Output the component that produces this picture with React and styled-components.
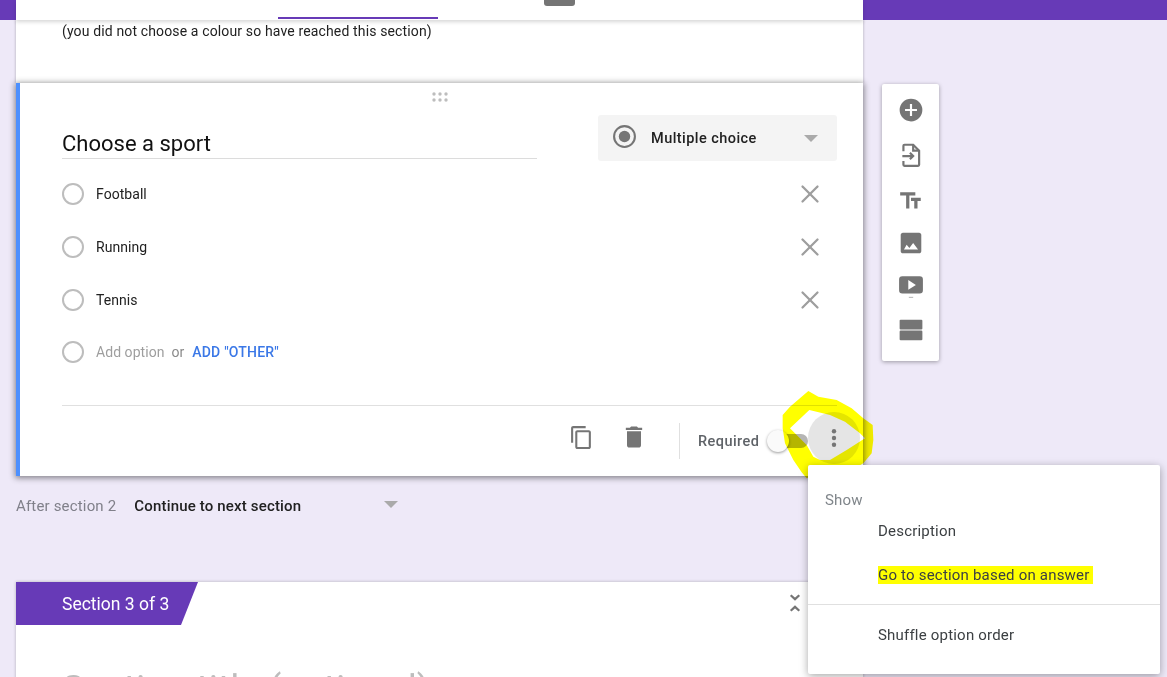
import React from 'react';
import styled, { createGlobalStyle } from 'styled-components';
import { X } from 'lucide-react';

const BG = '#eee9f8';
const Global = createGlobalStyle`
  html, body { margin: 0; padding: 0; height: 100%; overflow: hidden; background: ${BG}; }
  body { font-family: Roboto, "Noto Sans", sans-serif; color: #202124; }
  * { box-sizing: border-box; }
`;
const Page = styled.div`position: relative; width: 1167px; height: 677px; overflow: hidden; background: ${BG};`;
const TopBar = styled.header`position: relative; z-index: 3; height: 20px; background: #673ab7; padding: 0 304px 0 16px;`;
const TabStrip = styled.div`position: relative; height: 20px; background: #fff; box-shadow: 0 2px 4px rgba(0,0,0,.16);`;
const TabLine = styled.div`position: absolute; left: 262px; bottom: 1px; width: 160px; height: 2px; background: #673ab7;`;
const TabHandle = styled.div`position: absolute; left: 528px; top: 0; width: 31px; height: 6px; background: #757575; border-radius: 0 0 3px 3px;`;
const Column = styled.main`width: 847px; margin-left: 16px;`;
const DescCard = styled.section`height: 63px; background: #fff; padding: 2px 0 0 46px; font-size: 14px; letter-spacing: .14px; line-height: 18px; color: #212121; box-shadow: -1px 0 2px rgba(0,0,0,.14), 1px 0 2px rgba(0,0,0,.14);`;
const QuestionRow = styled.div`display: flex; align-items: flex-start; width: 923px;`;
const QuestionCard = styled.section`position: relative; z-index: 1; width: 847px; height: 393px; background: #fff; border-left: 4px solid #4d90fe; box-shadow: 0 1px 6px 1px rgba(0,0,0,.45); padding: 0 26px 0 42px;`;
const Drag = styled.svg`display: block; margin: 9px auto 0; position: relative; left: -9px;`;
const TitleRow = styled.div`display: flex; justify-content: space-between; margin-top: 13px;`;
const TitleField = styled.div`width: 475px; height: 44px; padding-top: 14px; border-bottom: 1px solid #dcdcdc; font-size: 22px; line-height: 30px; color: #111;`;
const TypeSelect = styled.div`display: flex; align-items: center; width: 239px; height: 46px; background: #f4f4f4; border-radius: 3px; padding: 0 19px 0 14px; font-size: 14.5px; letter-spacing: .45px; font-weight: 500; color: #212121;`;
const TypeIcon = styled.svg`display: block; flex: none; margin-bottom: 3px;`;
const TypeLabel = styled.span`flex: 1; margin-left: 14px;`;
const Caret = styled.span`display: block; flex: none; width: 0; height: 0; border-left: 7px solid transparent; border-right: 7px solid transparent; border-top: 7px solid #aaa;`;
const AfterCaret = styled(Caret)`margin-bottom: 4px;`;
const Options = styled.div`margin-top: 6px;`;
const OptionRow = styled.div`display: flex; align-items: center; height: ${p => p.$h || 53}px; font-size: 14px; letter-spacing: .05px; color: #212121;`;
const Radio = styled.span`width: 22px; height: 22px; border-radius: 50%; border: 2px solid #bdbdbd; margin-right: 12px; flex: none;`;
const OptionText = styled.span`flex: 1;`;
const Remove = styled(X)`color: #9e9e9e; margin-right: 12px; flex: none;`;
const AddText = styled.span`color: #9e9e9e;`;
const OrText = styled.span`color: #8a8a8a; margin: 0 8px 0 7px;`;
const OtherBtn = styled.span`font-weight: 500; letter-spacing: .2px; color: #3b78e7;`;
const Footer = styled.div`display: flex; align-items: center; margin-top: 27px; height: 71px; border-top: 1px solid #e0e0e0; padding-left: 507px;`;
const FootIcon = styled.svg`display: block; flex: none; margin: 0 ${p => p.$gap}px 8px 0;`;
const Divider = styled.div`width: 1px; height: 36px; background: #e0e0e0; margin-right: 18px;`;
const ReqLabel = styled.span`font-size: 14.5px; letter-spacing: .45px; font-weight: 500; color: #5f6368;`;
const Toggle = styled.div`position: relative; width: 38px; height: 14px; margin-left: 11px; border-radius: 7px; background: #b5b5b5;`;
const Knob = styled.span`position: absolute; left: -3px; top: -4px; width: 22px; height: 22px; border-radius: 50%; background: #fafafa; box-shadow: 0 1px 3px rgba(0,0,0,.4);`;
const MoreBtn = styled.div`position: absolute; left: 788px; top: 329px; width: 52px; height: 52px; display: flex; align-items: center; justify-content: center; border-radius: 50%; background: #e5e5e5;`;
const Scribble = styled.svg`position: absolute; left: 770px; top: 385px; z-index: 2; mix-blend-mode: multiply;`;
const SideTools = styled.aside`margin-left: 19px; margin-top: 1px; width: 57px; height: 277px; background: #fff; border-radius: 2px; box-shadow: 0 1px 4px rgba(0,0,0,.35); display: flex; flex-direction: column; align-items: center; padding-top: 4px;`;
const ToolBtn = styled.div`height: 44px; width: 100%; display: flex; align-items: center; justify-content: center; flex: none; padding-top: ${p => p.$pt || 0}px;`;
const AfterRow = styled.div`display: flex; align-items: center; height: 60px; font-size: 15px; letter-spacing: .17px; width: 382px;`;
const AfterLabel = styled.span`color: #80808a; margin-right: 18px;`;
const AfterValue = styled.span`flex: 1; font-weight: 500; color: #212121;`;
const SectionCard = styled.section`position: relative; margin-top: 46px; height: 200px; background: #fff; box-shadow: 0 0 3px rgba(0,0,0,.25);`;
const SectionTag = styled.div`width: 182px; height: 43px; background: #673ab7; color: #fff; font-size: 17.5px; line-height: 44px; padding-left: 46px; clip-path: polygon(0 0, 100% 0, 165px 100%, 0 100%);`;
const Collapse = styled.svg`position: absolute; left: 773px; top: 11px; display: block;`;
const SectionTitle = styled.div`margin: 41px 0 0 46px; font-size: 37.5px; line-height: 44px; color: #bdbdbd; white-space: nowrap;`;
const Menu = styled.div`position: absolute; z-index: 4; left: 808px; top: 465px; width: 352px; height: 209px; background: #fff; border-radius: 2px; box-shadow: 0 2px 8px rgba(0,0,0,.35); padding-top: 25px; font-size: 15px; letter-spacing: .2px; color: #3c4043;`;
const MenuHead = styled.div`padding-left: 17px; line-height: 20px; margin-bottom: -1px; color: #80868b;`;
const MenuItem = styled.div`height: 44px; padding-left: 70px; line-height: 44px;`;
const Mark = styled.span`background: #ffff00; padding-right: 3px;`;
const MenuSep = styled.div`height: 1px; background: #e0e0e0; margin: 7px 0 8px;`;

const I = '#757575';
const options = ['Football', 'Running', 'Tennis'];

export default function App() {
  return (
    <Page>
      <Global />
      <TopBar><TabStrip><TabLine /><TabHandle /></TabStrip></TopBar>
      <Column>
        <DescCard>(you did not choose a colour so have reached this section)</DescCard>
        <QuestionRow>
          <QuestionCard>
            <Drag width="18" height="10" viewBox="0 0 18 10" fill="#bdbdbd">
              {[2, 8, 14].map(x => [2, 8].map(y => <circle key={x + '-' + y} cx={x} cy={y} r="1.7" />))}
            </Drag>
            <TitleRow>
              <TitleField>Choose a sport</TitleField>
              <TypeSelect>
                <TypeIcon width="25" height="25" viewBox="0 0 24 24"><circle cx="12" cy="12" r="10" fill="none" stroke={I} strokeWidth="2" /><circle cx="12" cy="12" r="5.5" fill={I} /></TypeIcon>
                <TypeLabel>Multiple choice</TypeLabel>
                <Caret />
              </TypeSelect>
            </TitleRow>
            <Options>
              {options.map(o => (
                <OptionRow key={o}><Radio /><OptionText>{o}</OptionText><Remove size={30} strokeWidth={1.8} /></OptionRow>
              ))}
              <OptionRow $h={52}><Radio /><AddText>Add option</AddText><OrText>or</OrText><OtherBtn>ADD "OTHER"</OtherBtn></OptionRow>
            </Options>
            <Footer>
              <FootIcon $gap={26} width="25" height="25" viewBox="0 0 24 24" fill={I}><path d="M16 1H4c-1.1 0-2 .9-2 2v14h2V3h12V1zm3 4H8c-1.1 0-2 .9-2 2v14c0 1.100.9 2 2 2h11c1.100 0 2-.9 2-2V7c0-1.100-.9-2-2-2zm0 16H8V7h11v14z" /></FootIcon>
              <FootIcon $gap={31} width="28" height="28" viewBox="0 0 24 24" fill={I}><path d="M6 19c0 1.100.9 2 2 2h8c1.100 0 2-.9 2-2V7H6v12zM19 4h-3.500l-1-1h-5l-1 1H5v2h14V4z" /></FootIcon>
              <Divider />
              <ReqLabel>Required</ReqLabel>
              <Toggle><Knob /></Toggle>
            </Footer>
            <MoreBtn>
              <svg width="6" height="20" viewBox="0 0 6 20" fill={I}><circle cx="3" cy="3.300" r="2.200" /><circle cx="3" cy="10" r="2.200" /><circle cx="3" cy="16.700" r="2.200" /></svg>
            </MoreBtn>
          </QuestionCard>
          <SideTools>
            <ToolBtn><svg width="26" height="26" viewBox="0 0 24 24" fill={I}><path d="M12 1.500a10.500 10.500 0 1 0 0 21 10.500 10.500 0 0 0 0-21zm5.500 11.500H13v4.500h-2V13H6.500v-2H11V6.500h2V11h4.500v2z" /></svg></ToolBtn>
            <ToolBtn $pt={2}><svg width="26" height="26" viewBox="0 0 24 24" fill="none" stroke={I} strokeWidth="2"><path d="M5 8.500V3.500a1 1 0 0 1 1-1h8l5.500 5.500v13a1 1 0 0 1-1 1H6a1 1 0 0 1-1-1v-3.500" /><path d="M14 2.500V8h5.500" /><path d="M4 13h10M11 10l3 3-3 3" /></svg></ToolBtn>
            <ToolBtn $pt={5}><svg width="26" height="26" viewBox="0 0 24 24" fill={I}><path d="M2 4v3h5.500v12h3V7H16V4H2zm19 5h-9v3h3v7h3v-7h3V9z" /></svg></ToolBtn>
            <ToolBtn $pt={2}><svg width="26" height="26" viewBox="0 0 24 24" fill={I}><path d="M21.500 19.500v-15c0-1.100-.9-2-2-2h-15c-1.100 0-2 .9-2 2v15c0 1.100.9 2 2 2h15c1.100 0 2-.9 2-2zM8 13.500l2.500 3 3.500-4.500 4.500 6h-13L8 13.500z" /></svg></ToolBtn>
            <ToolBtn><svg width="26" height="26" viewBox="0 0 24 24" fill={I}><path d="M4 3h16a3 3 0 0 1 3 3v10a3 3 0 0 1-3 3H4a3 3 0 0 1-3-3V6a3 3 0 0 1 3-3zm5.500 3.500v9l7-4.500-7-4.500z" /><rect x="10" y="22" width="4" height="1" opacity=".5" /></svg></ToolBtn>
            <ToolBtn><svg width="26" height="26" viewBox="0 0 24 24" fill={I}><rect x="1.500" y="2.500" width="21" height="9" rx="1" /><rect x="1.500" y="12.500" width="21" height="9" rx="1" /></svg></ToolBtn>
          </SideTools>
        </QuestionRow>
        <AfterRow>
          <AfterLabel>After section 2</AfterLabel>
          <AfterValue>Continue to next section</AfterValue>
          <AfterCaret />
        </AfterRow>
        <SectionCard>
          <SectionTag>Section 3 of 3</SectionTag>
          <Collapse width="12" height="20" viewBox="0 0 14 22" fill="none" stroke={I} strokeWidth="2.600"><path d="M2 2l5 4.500L12 2M2 20l5-4.500L12 20" /></Collapse>
          <SectionTitle>Section title (optional)</SectionTitle>
        </SectionCard>
      </Column>
      <Scribble width="110" height="95" viewBox="0 0 330 285" fill="#ffff00">
        <path fillRule="evenodd" d="M115 18 L145 35 L200 45 L245 70 L280 100 L308 120 L310 165 L305 205 L280 235 L240 258 L150 270 L110 280 L95 262 L70 225 L45 175 L38 130 L38 90 L60 65 Z M118 75 L60 130 L110 180 L130 215 L150 225 L180 225 L230 195 L285 160 L270 145 L225 110 L180 90 Z" />
      </Scribble>
      <Menu>
        <MenuHead>Show</MenuHead>
        <MenuItem>Description</MenuItem>
        <MenuItem><Mark>Go to section based on answer</Mark></MenuItem>
        <MenuSep />
        <MenuItem>Shuffle option order</MenuItem>
      </Menu>
    </Page>
  );
}
